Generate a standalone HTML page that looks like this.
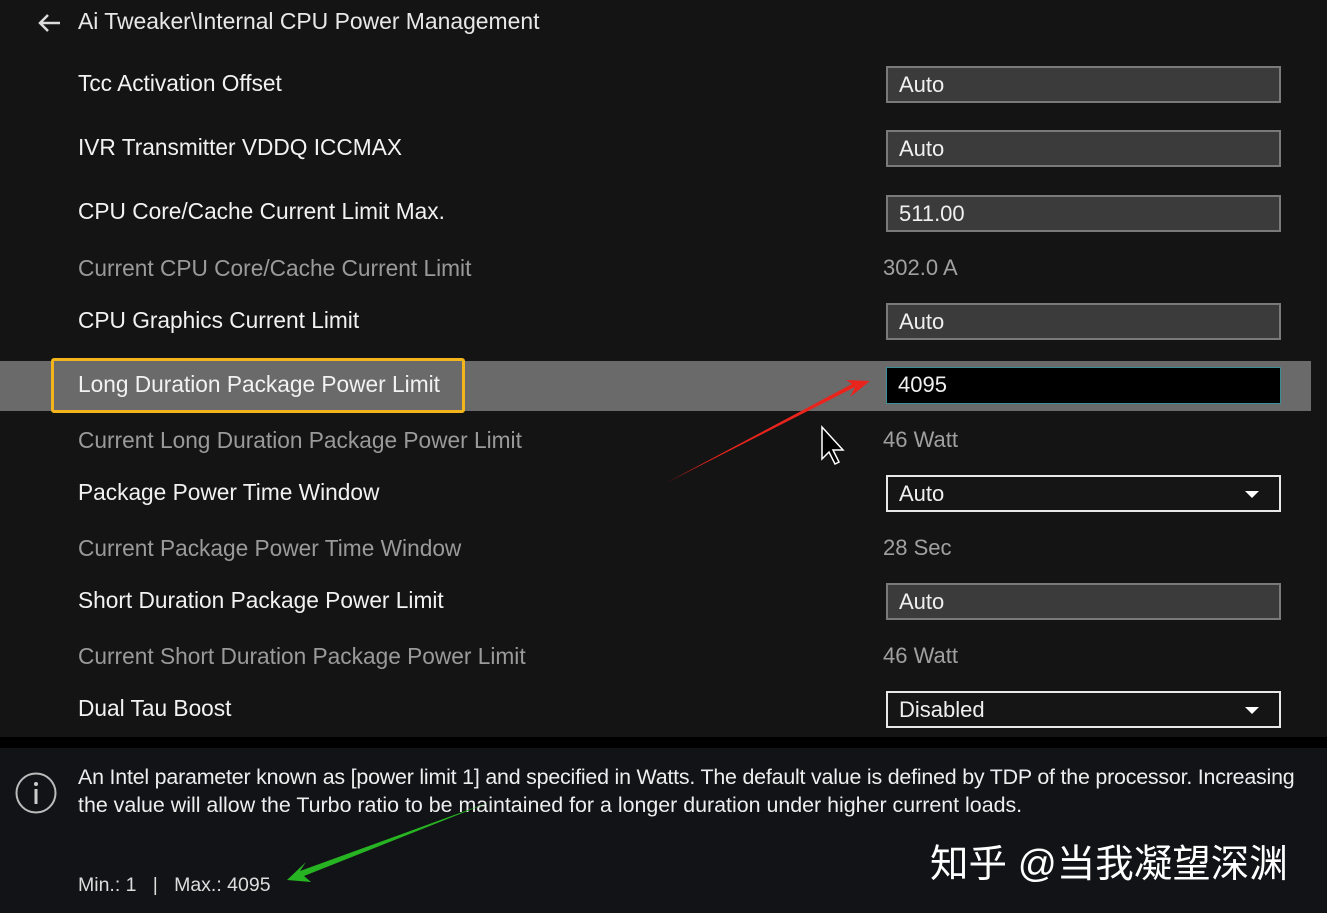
<!DOCTYPE html>
<html><head><meta charset="utf-8"><style>
body{margin:0;width:1327px;height:913px;overflow:hidden;background:#141414;font-family:"Liberation Sans","Noto Sans CJK SC",sans-serif;position:relative;color:#f0f0f0}
.a{position:absolute;white-space:nowrap}
.l{left:78px;font-size:22.7px;color:#f2f2f2;line-height:24px}
.g{color:#9a9a9a}
.b{position:absolute;left:886px;width:391px;height:33px;background:#3b3b3b;border:2px solid #7a7a7a;box-sizing:content-box;font-size:22px;line-height:33px;padding-left:0}
.b span{margin-left:11px}
.d{background:#151515;border-color:#e8e8e8}
.d:after{content:"";position:absolute;right:20px;top:14px;border-left:7px solid transparent;border-right:7px solid transparent;border-top:7px solid #fff}
.v{left:883px;font-size:22px;color:#a0a0a0;line-height:24px}
</style></head><body>
<svg class="a" style="left:36px;top:12px" width="26" height="22"><path d="M24 11H4M12 3L4 11l8 8" stroke="#ddd" stroke-width="2.5" fill="none"/></svg>
<div class="a" style="left:78px;top:8px;font-size:22.9px;color:#e8e8e8">Ai Tweaker\Internal CPU Power Management</div>

<div class="a l" style="top:71px">Tcc Activation Offset</div>
<div class="b" style="top:66px"><span>Auto</span></div>
<div class="a l" style="top:135px">IVR Transmitter VDDQ ICCMAX</div>
<div class="b" style="top:130px"><span>Auto</span></div>
<div class="a l" style="top:199px">CPU Core/Cache Current Limit Max.</div>
<div class="b" style="top:195px"><span>511.00</span></div>
<div class="a l g" style="top:256px">Current CPU Core/Cache Current Limit</div>
<div class="a v" style="top:256px">302.0 A</div>
<div class="a l" style="top:308px">CPU Graphics Current Limit</div>
<div class="b" style="top:303px"><span>Auto</span></div>

<div class="a" style="left:0;top:361px;width:1311px;height:50px;background:#6a6a6a"></div>
<div class="a" style="left:51px;top:358px;width:408px;height:49px;border:3px solid #f3b51b;border-radius:3px"></div>
<div class="a l" style="top:372px">Long Duration Package Power Limit</div>
<div class="b" style="top:367px;background:#000;border-color:#3a8f96;border-width:1px;height:35px;width:393px"><span>4095</span></div>

<div class="a l g" style="top:428px">Current Long Duration Package Power Limit</div>
<div class="a v" style="top:428px">46 Watt</div>
<div class="a l" style="top:480px">Package Power Time Window</div>
<div class="b d" style="top:475px"><span>Auto</span></div>
<div class="a l g" style="top:536px">Current Package Power Time Window</div>
<div class="a v" style="top:536px">28 Sec</div>
<div class="a l" style="top:588px">Short Duration Package Power Limit</div>
<div class="b" style="top:583px"><span>Auto</span></div>
<div class="a l g" style="top:644px">Current Short Duration Package Power Limit</div>
<div class="a v" style="top:644px">46 Watt</div>
<div class="a l" style="top:696px">Dual Tau Boost</div>
<div class="b d" style="top:691px"><span>Disabled</span></div>

<div class="a" style="left:0;top:737px;width:1327px;height:11px;background:#000"></div>
<div class="a" style="left:0;top:748px;width:1327px;height:165px;background:#121316"></div>
<svg class="a" style="left:14px;top:771px" width="44" height="44"><circle cx="22" cy="22" r="19.5" stroke="#bbb" stroke-width="2" fill="none"/><circle cx="22" cy="13" r="2" fill="#ccc"/><rect x="20.5" y="18" width="3" height="15" fill="#ccc"/></svg>
<div class="a" style="left:78px;top:763px;font-size:21.4px;line-height:28px;color:#eee"><span style="letter-spacing:-0.2px">An Intel parameter known as [power limit 1] and specified in Watts. The default value is defined by TDP of the processor. Increasing</span><br>the value will allow the Turbo ratio to be maintained for a longer duration under higher current loads.</div>
<div class="a" style="left:78px;top:874px;font-size:19.5px;color:#ddd">Min.: 1 &nbsp;&nbsp;| &nbsp;&nbsp;Max.: 4095</div>
<div class="a" style="left:930px;top:833px;font-size:38.5px;color:#fff">知乎 @当我凝望深渊</div>

<svg class="a" style="left:0;top:0" width="1327" height="913">
<polygon points="666,483 855,387 850,397 870,381 846,380 852,384" fill="#e8241c"/>
<polygon points="490,802 300,871 306,862 287,880 311,882 304,876" fill="#27b423"/>
<path d="M822 427v32l7-7 6 12 4-2-6-12 10 0z" fill="#000" stroke="#fff" stroke-width="1.5"/>
</svg>
</body></html>
